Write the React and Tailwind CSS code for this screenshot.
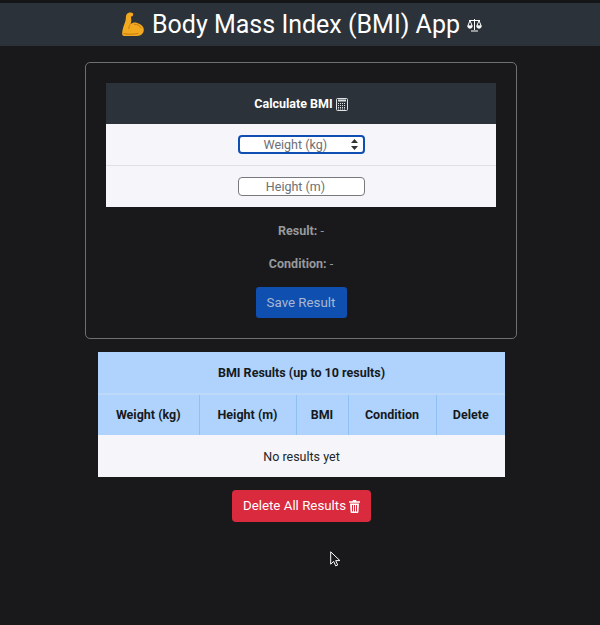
import React from 'react';

const Muscle = () => (
  <svg width="24" height="25" viewBox="0 0 23 25" className="shrink-0">
    <path d="M5.600 1.800C7 .4 10.200 0 11.300 1.300c.8 1 .4 2.400-.6 3-.4.300-.9.300-1.300.200.2 1.700.6 3.800.3 5.300-.2 1-.5 1.800-.7 2.500 1.500-1.500 3.800-2.100 6-1.600 2.800.6 5.700 2.400 6.800 4.700 1 2.200.5 5-1.400 6.800-1.800 1.700-4.400 1.900-7.200 1.900H3.500c-1.800 0-2.900-.8-2.900-2.300C.6 18 2.500 13.200 3.700 9.800c.6-1.700.6-3.200.7-4.700.1-1.300.4-2.500 1.200-3.300z" fill="#f2a91f" />
    <path d="M8.400 12.800c-.8 1.200-1.100 2.600-1 3.900M13 12.300c2.900-.2 5.700 1.300 6.700 3.700M2.500 21.700c3.700.8 9.800.7 13.800-.1" fill="none" stroke="#c77a12" strokeWidth="1" strokeLinecap="round" />
  </svg>
);

const Scales = () => (
  <svg width="15" height="14" viewBox="0 0 15 14" fill="none" stroke="#fff" strokeWidth="1" className="shrink-0 mt-px">
    <path d="M7.500 1v11M4 13h7M2 2.500h11M3 2.500 .8 8h4.400zM12 2.500 9.800 8h4.400z" />
    <path d="M.8 8.200a2.200 2 0 0 0 4.400 0zM9.800 8.200a2.200 2 0 0 0 4.400 0z" fill="#fff" />
  </svg>
);

const Calculator = () => (
  <svg width="12" height="13" viewBox="0 0 12 13" className="shrink-0">
    <rect x="0.500" y="0.500" width="11" height="12" rx="1" fill="none" stroke="#dfe2e5" />
    <path d="M2 2.500h8" stroke="#dfe2e5" strokeWidth="2" />
    <path d="M2 5.500h8M2 7.500h8M2 9.500h8M2 11h8" stroke="#dfe2e5" strokeWidth="1" strokeDasharray="1 1" />
  </svg>
);

const Trash = () => (
  <svg width="11" height="13" viewBox="0 0 11 13" fill="#fff" className="shrink-0">
    <path d="M4 0h3l.6 1.200H11v1.500H0V1.200h3.400zM1 3.600h9l-.6 8.300c0 .6-.5 1.100-1.100 1.100H2.700c-.6 0-1.100-.5-1.100-1.100zM3 5v6.500h1V5zm2 0v6.500h1V5zm2 0v6.500h1V5z" fillRule="evenodd" />
  </svg>
);

const Spinner = () => (
  <svg width="9" height="13" viewBox="0 0 9 13" className="shrink-0" fill="#333">
    <path d="M4.500 1 8 5H1zM1 8h7l-3.500 4z" />
  </svg>
);

const Cursor = () => (
  <svg width="11" height="16" viewBox="0 0 11 16" className="absolute left-[330px] top-[551px]">
    <path d="M.7.800v12.400l3-2.800 2 4.500 2-.9-2-4.400h4.200z" fill="#19191b" stroke="#fff" strokeWidth="1" />
  </svg>
);

const columns = [
  ['Weight (kg)', 'w-[101px]'],
  ['Height (m)', 'w-[97px]'],
  ['BMI', 'w-[52px]'],
  ['Condition', 'w-[88px]'],
  ['Delete', 'w-[69px]'],
];

const App = () => {
  return (
    <div className="relative min-h-[625px] bg-[#19191b] font-['Roboto',sans-serif] text-white overflow-hidden">
      <div className="h-[3px] bg-[#141517]" />
      <header className="h-[43px] bg-[#2c3239] flex items-center justify-center gap-[7px] pl-[3px]">
        <Muscle />
        <h1 className="text-[25px] leading-none text-white">Body Mass Index (BMI) App</h1>
        <Scales />
      </header>

      <section className="mt-4 ml-[85px] w-[432px] h-[277px] border border-[#6d7073] rounded-[5px] p-5 flex flex-col items-center">
        <div className="w-[390px] bg-[#f5f5fa] text-[#212529]">
          <div className="h-[41px] pt-[2px] bg-[#2c3239] text-white text-[12.500px] font-bold flex items-center justify-center gap-[3px]">
            Calculate BMI <Calculator />
          </div>
          <div className="h-[42px] flex items-center justify-center border-b border-[#dee0e4]">
            <div className="w-[127px] h-[19px] bg-white border-2 border-[#0f4fb3] rounded-[4px] flex items-center pl-6 pr-1 justify-between">
              <span className="text-[12.500px] leading-none pt-px text-[#6c6f74]">Weight (kg)</span>
              <Spinner />
            </div>
          </div>
          <div className="h-[41px] flex items-center justify-center">
            <input
              type="text"
              placeholder="Height (m)"
              className="w-[127px] h-[19px] pr-[11px] bg-white border border-[#77797c] rounded-[4px] text-[12.500px] leading-none text-center placeholder:text-[#6c6f74]"
            />
          </div>
        </div>

        <p className="mt-4 text-[12.500px] leading-[16px] text-[#97999c]"><b>Result:</b> -</p>
        <p className="mt-[17px] text-[12.500px] leading-[16px] text-[#97999c]"><b>Condition:</b> -</p>
        <button className="mt-[15px] w-[91px] h-8 bg-[#0f4fb0] rounded-[3px] text-[13.300px] text-[#a9b9d2]">Save Result</button>
      </section>

      <table className="mt-[13px] ml-[98px] w-[407px] table-fixed border-collapse text-[12.500px] text-[#16191d]">
        <colgroup>
          {columns.map(([label, width]) => (
            <col key={label} className={width} />
          ))}
        </colgroup>
        <thead>
          <tr className="h-[42px] bg-[#afd3fc]">
            <th colSpan={5} className="pt-[2px] font-bold border-b-2 border-[#bcd9fa]">BMI Results (up to 10 results)</th>
          </tr>
          <tr className="h-[41px] bg-[#afd3fc]">
            {columns.map(([label], i) => (
              <th key={label} className={`font-bold ${i < 4 ? 'border-r border-[#8fc0f2]' : ''}`}>{label}</th>
            ))}
          </tr>
        </thead>
        <tbody>
          <tr className="h-[42px] bg-[#f5f5fa]">
            <td colSpan={5} className="pt-[2px] text-center text-[#212529]">No results yet</td>
          </tr>
        </tbody>
      </table>

      <button className="mt-[13px] ml-[232px] w-[139px] h-8 bg-[#d92a3e] rounded-[4px] text-[13.300px] text-white flex items-center justify-center gap-[3px]">
        Delete All Results <Trash />
      </button>

      <Cursor />
    </div>
  );
};

export default App;
